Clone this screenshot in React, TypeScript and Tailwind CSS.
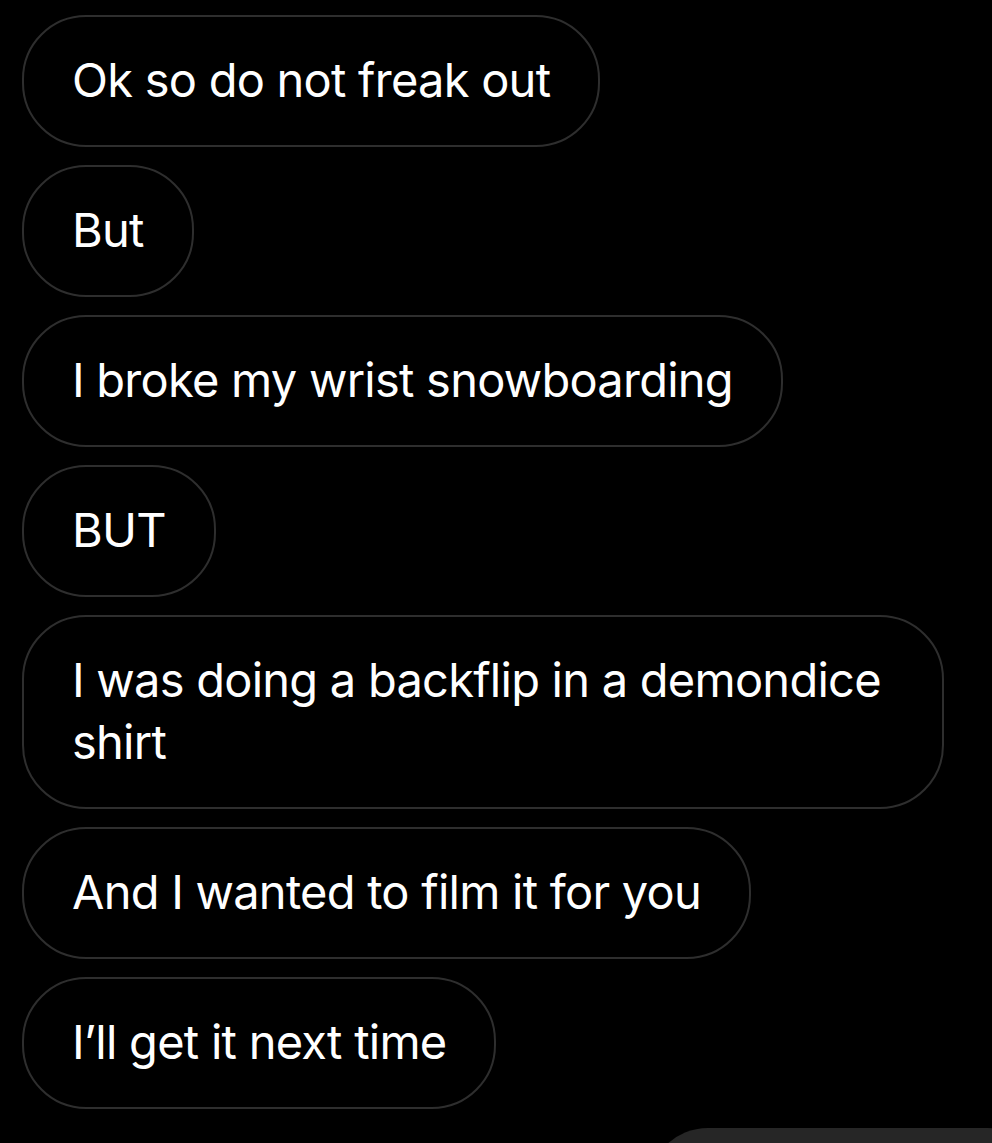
const MESSAGES = [
  'Ok so do not freak out',
  'But',
  'I broke my wrist snowboarding',
  'BUT',
  'I was doing a backflip in a demondice shirt',
  'And I wanted to film it for you',
  'I\u2019ll get it next time',
]

function Bubble({ text }: { text: string }) {
  return (
    <div className="max-w-[922px] self-start rounded-[64px] border-2 border-[#2e2e2e] px-[48px] pt-[32px] pb-[34px] text-[47px] leading-[62px] tracking-[-0.016em] text-white">
      {text}
    </div>
  )
}

export default function App() {
  return (
    <div
      className="relative h-[1143px] w-[992px] overflow-hidden bg-black"
      style={{ fontFamily: 'Inter, "Noto Sans", sans-serif' }}
    >
      <div className="flex flex-col gap-[18px] pl-[22px] pt-[15px]">
        {MESSAGES.map((m) => (
          <Bubble key={m} text={m} />
        ))}
      </div>
      {/* outgoing bubble peeking in at the bottom */}
      <div className="absolute left-[648px] top-[1128px] h-[120px] w-[400px] rounded-[60px] bg-[#262626]" />
    </div>
  )
}
